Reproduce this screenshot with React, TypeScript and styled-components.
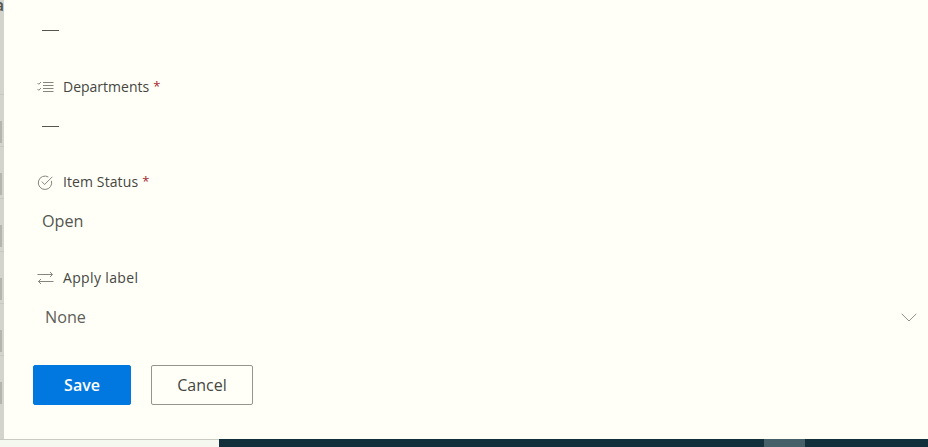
import React from 'react';
import styled, { createGlobalStyle } from 'styled-components';

const GlobalStyle = createGlobalStyle`
    html, body {
        margin: 0;
        padding: 0;
        background: #fffff8;
    }
    body {
        font-family: 'Open Sans', 'Noto Sans', Arial, sans-serif;
        overflow: hidden;
    }
`;

const Page = styled.div`
    width: 928px;
    height: 447px;
    display: flex;
    flex-direction: column;
    overflow: hidden;
`;

const Main = styled.div`
    display: flex;
    height: 439px;
`;

const Backdrop = styled.div`
    width: 4px;
    flex-shrink: 0;
    background: #d3d5cd;
    display: flex;
    flex-direction: column;
    overflow: hidden;
`;

const BackdropLetter = styled.div`
    height: 12px;
    margin-bottom: 82px;
    display: flex;
    justify-content: flex-end;
    font-size: 16px;
    line-height: 10px;
    font-weight: 600;
    color: #55574f;
`;

const BackdropRow = styled.div`
    height: 52.2px;
    flex-shrink: 0;
    box-sizing: border-box;
    border-top: 1px solid #c8cac2;
    padding-top: 26px;
`;

const BackdropTab = styled.div`
    width: 2px;
    height: 22px;
    background: #b4b6ae;
`;

const Panel = styled.div`
    flex: 1;
    background: #fffff8;
    padding: 0 11px 0 29px;
    display: flex;
    flex-direction: column;
`;

const ValueDash = styled.div<{ $top: number }>`
    width: 17px;
    height: 1px;
    margin: ${(p) => p.$top}px 0 0 9px;
    background: #55564f;
`;

const Field = styled.div<{ $top: number }>`
    display: flex;
    flex-direction: column;
    margin-top: ${(p) => p.$top}px;
`;

const FieldLabel = styled.div`
    display: flex;
    align-items: center;
    height: 20px;
    font-size: 14px;
    font-weight: 500;
    color: #45463f;
`;

const LabelText = styled.span<{ $spacing?: number }>`
    padding-bottom: 2px;
    letter-spacing: ${(p) => p.$spacing ?? 0}px;
`;

const IconSlot = styled.span`
    width: 26px;
    height: 20px;
    margin-left: 4px;
    display: flex;
    align-items: center;
    color: #85867e;
`;

const Required = styled.span`
    color: #a4262c;
    font-size: 13px;
    margin-left: 4px;
    padding-bottom: 2px;
`;

const FieldValue = styled.div`
    font-size: 16.2px;
    line-height: 22px;
    color: #55564f;
    margin: 18px 0 0 9px;
`;

const SelectRow = styled.div`
    display: flex;
    align-items: center;
    justify-content: space-between;
    height: 22px;
    margin: 18px 0 0 12px;
    font-size: 16.2px;
    color: #5f6059;
`;

const Actions = styled.div`
    display: flex;
    gap: 20px;
    margin-top: 37px;
`;

const ActionButton = styled.button<{ $primary?: boolean }>`
    width: ${(p) => (p.$primary ? '98px' : '102px')};
    height: 40px;
    border-radius: 2px;
    box-sizing: border-box;
    font-family: inherit;
    font-size: 16px;
    font-weight: ${(p) => (p.$primary ? 600 : 500)};
    padding: 0;
    color: ${(p) => (p.$primary ? '#ffffff' : '#45463f')};
    background: ${(p) => (p.$primary ? '#0078e0' : '#fffff8')};
    border: 1px solid ${(p) => (p.$primary ? '#0078e0' : '#94958e')};
`;

const BottomBar = styled.div`
    display: flex;
    height: 8px;
`;

const BottomLight = styled.div`
    width: 219px;
    background: #f5f8ef;
    border-top: 1px solid #c9cbc3;
    box-sizing: border-box;
`;

const BottomDark = styled.div`
    flex: 1;
    background: #12303c;
    display: flex;
    padding-left: 545px;
`;

const BottomThumb = styled.div`
    width: 41px;
    background: #46606a;
`;

const ChecklistIcon = () => (
    <svg width="17" height="14" viewBox="0 0 17 14" fill="none" stroke="currentColor" strokeWidth="1">
        <path d="M0.5 3l1.3 1.3L4 2M0.5 9l1.3 1.3L4 8" />
        <path d="M6 2.5h10.5M6 5.5h10.5M6 8.5h10.5M6 11.5h10.5" />
    </svg>
);

const StatusIcon = () => (
    <svg width="16" height="16" viewBox="0 0 16 16" fill="none" stroke="currentColor" strokeWidth="1">
        <path d="M14.4 6.8A6.7 6.7 0 1 1 11.4 3" />
        <path d="M4.8 7.6l2.8 2.9L15.3 2.8" />
    </svg>
);

const SwapIcon = () => (
    <svg width="17" height="14" viewBox="0 0 17 14" fill="none" stroke="currentColor" strokeWidth="1">
        <path d="M0.5 3.5h15M13 1l2.5 2.5L13 6" />
        <path d="M16.5 10.5h-15M4 8l-2.5 2.5L4 13" />
    </svg>
);

const ChevronIcon = () => (
    <svg width="16" height="9" viewBox="0 0 16 9" fill="none" stroke="#8f908a" strokeWidth="1">
        <path d="M0.7 0.8L8 8L15.3 0.8" />
    </svg>
);

const App: React.FC = () => {
    const rows = [0, 1, 2, 3, 4, 5];
    return (
        <Page>
            <GlobalStyle />
            <Main>
                <Backdrop>
                    <BackdropLetter>a</BackdropLetter>
                    {rows.map((r) => (
                        <BackdropRow key={r}>
                            <BackdropTab />
                        </BackdropRow>
                    ))}
                </Backdrop>
                <Panel>
                    <ValueDash $top={30} />
                    <Field $top={46}>
                        <FieldLabel>
                            <IconSlot>
                                <ChecklistIcon />
                            </IconSlot>
                            <LabelText>Departments</LabelText>
                            <Required>*</Required>
                        </FieldLabel>
                        <ValueDash $top={29} />
                    </Field>
                    <Field $top={45}>
                        <FieldLabel>
                            <IconSlot>
                                <StatusIcon />
                            </IconSlot>
                            <LabelText $spacing={0.1}>Item Status</LabelText>
                            <Required>*</Required>
                        </FieldLabel>
                        <FieldValue>Open</FieldValue>
                    </Field>
                    <Field $top={36}>
                        <FieldLabel>
                            <IconSlot>
                                <SwapIcon />
                            </IconSlot>
                            <LabelText $spacing={0.35}>Apply label</LabelText>
                        </FieldLabel>
                        <SelectRow>
                            None
                            <ChevronIcon />
                        </SelectRow>
                    </Field>
                    <Actions>
                        <ActionButton $primary>Save</ActionButton>
                        <ActionButton>Cancel</ActionButton>
                    </Actions>
                </Panel>
            </Main>
            <BottomBar>
                <BottomLight />
                <BottomDark>
                    <BottomThumb />
                </BottomDark>
            </BottomBar>
        </Page>
    );
};

export default App;
